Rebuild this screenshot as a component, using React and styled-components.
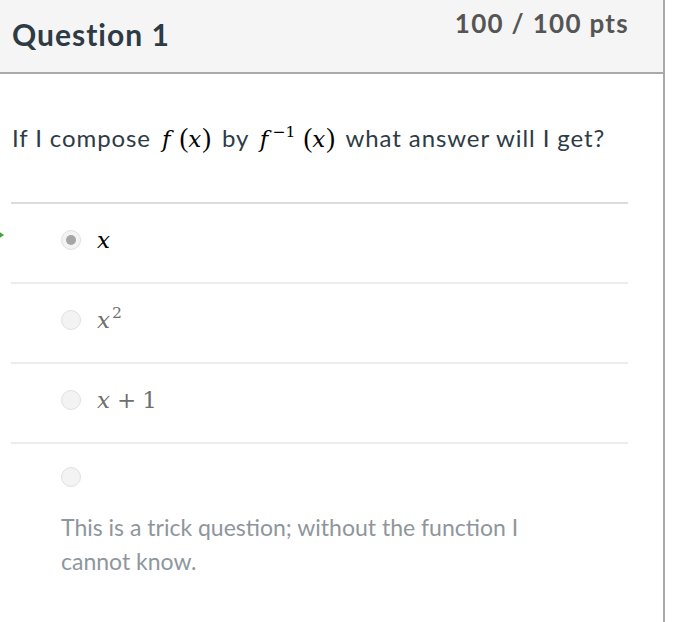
import React from "react"
import styled, { createGlobalStyle } from "styled-components"

const GlobalStyle = createGlobalStyle`
  html, body {
    margin: 0;
    padding: 0;
    background: #fff;
    font-family: Lato, "Open Sans", sans-serif;
    overflow: hidden;
  }
`

const Card = styled.div`
  position: relative;
  width: 663px;
  height: 622px;
  border-right: 2px solid #a9a9a9;
  background: #fff;
`

const Header = styled.div`
  height: 74px;
  box-sizing: border-box;
  background: #f5f5f5;
  border-bottom: 2px solid #aaa;
  display: flex;
  justify-content: space-between;
  align-items: flex-start;
  padding: 0 34px 0 12px;
`

const Title = styled.h2`
  margin: 0;
  padding-top: 14px;
  font-size: 30px;
  line-height: 40px;
  font-weight: 700;
  letter-spacing: 1px;
  color: #2d3b45;
`

const Points = styled.div`
  padding-top: 7px;
  font-size: 26px;
  line-height: 32px;
  font-weight: 700;
  letter-spacing: 1.3px;
  color: #555;
`

const QuestionText = styled.p`
  margin: 0;
  padding: 48px 12px 0;
  height: 128px;
  box-sizing: border-box;
  font-size: 24px;
  line-height: 32px;
  letter-spacing: 0.9px;
  color: #2d3b45;
  white-space: nowrap;
`

const Math = styled.span`
  font-family: "DejaVu Serif", "Liberation Serif", serif;
  font-size: 23px;
  line-height: 32px;
  letter-spacing: 0;
  color: ${({ muted }) => (muted ? "#6f6f6f" : "#000")};
  margin: ${({ inline }) => (inline ? "0 4px" : "0")};
`

const I = styled.i`
  font-style: italic;
  padding-right: 1px;
`

const Paren = styled.span`
  font-family: "Liberation Serif", serif;
  font-size: 1.15em;
  margin-left: ${({ open }) => (open ? "8px" : "0")};
`

const Op = styled.span`
  margin: 0 6px;
  font-weight: 300;
`

const Sup = styled.sup`
  font-size: 0.68em;
  vertical-align: 0.65em;
  line-height: 0;
  margin-left: ${({ tight }) => (tight ? "1px" : "3px")};
  font-style: normal;
`

const Answers = styled.div`
  margin: 0 35px 0 11px;
`

const Row = styled.label`
  display: block;
  position: relative;
  border-top: ${({ first }) => (first ? "2px solid #dcdcdc" : "2px solid #ececec")};
  min-height: 78px;
`

const Line = styled.div`
  display: flex;
  align-items: center;
  height: ${({ short }) => (short ? "66px" : "72px")};
  padding-left: 50px;
`

const Radio = styled.span`
  width: 18px;
  height: 18px;
  border-radius: 50%;
  background: #f3f3f3;
  border: 1px solid #e0e0e0;
  display: inline-flex;
  align-items: center;
  justify-content: center;
  flex-shrink: 0;
  margin-right: 16px;

  &::after {
    content: "";
    display: ${({ checked }) => (checked ? "block" : "none")};
    width: 10px;
    height: 10px;
    border-radius: 50%;
    background: #a6a6a6;
  }
`

const Label = styled.div`
  padding-left: 50px;
  font-size: 23px;
  line-height: 34px;
  color: #8e969c;
  width: 480px;
`

const CorrectMark = styled.span`
  position: absolute;
  left: -17px;
  top: 24px;
  width: 0;
  height: 0;
  border-top: 7px solid transparent;
  border-bottom: 7px solid transparent;
  border-left: 10px solid #3fa535;
`

const answers = [
  { id: "a", math: true, checked: true, body: <I>x</I> },
  {
    id: "b",
    math: true,
    body: (
      <>
        <I>x</I>
        <Sup tight>2</Sup>
      </>
    ),
  },
  {
    id: "c",
    math: true,
    body: (
      <>
        <I>x</I>
        <Op>+</Op>1
      </>
    ),
  },
  {
    id: "d",
    body: "This is a trick question; without the function I cannot know.",
  },
]

export default function App() {
  return (
    <>
      <GlobalStyle />
      <Card>
        <Header>
          <Title>Question 1</Title>
          <Points>100 / 100 pts</Points>
        </Header>
        <QuestionText>
          If I compose{" "}
          <Math inline>
            <I>f</I>
            <Paren open>(</Paren>
            <I>x</I>
            <Paren>)</Paren>
          </Math>{" "}
          by{" "}
          <Math inline>
            <I>f</I>
            <Sup>−1</Sup>
            <Paren open>(</Paren>
            <I>x</I>
            <Paren>)</Paren>
          </Math>{" "}
          what answer will I get?
        </QuestionText>
        <Answers>
          {answers.map((a, i) => (
            <Row key={a.id} first={i === 0}>
              {a.checked && <CorrectMark />}
              <Line short={!a.math}>
                <Radio checked={a.checked} />
                {a.math && <Math muted={!a.checked}>{a.body}</Math>}
              </Line>
              {!a.math && <Label>{a.body}</Label>}
            </Row>
          ))}
        </Answers>
      </Card>
    </>
  )
}
